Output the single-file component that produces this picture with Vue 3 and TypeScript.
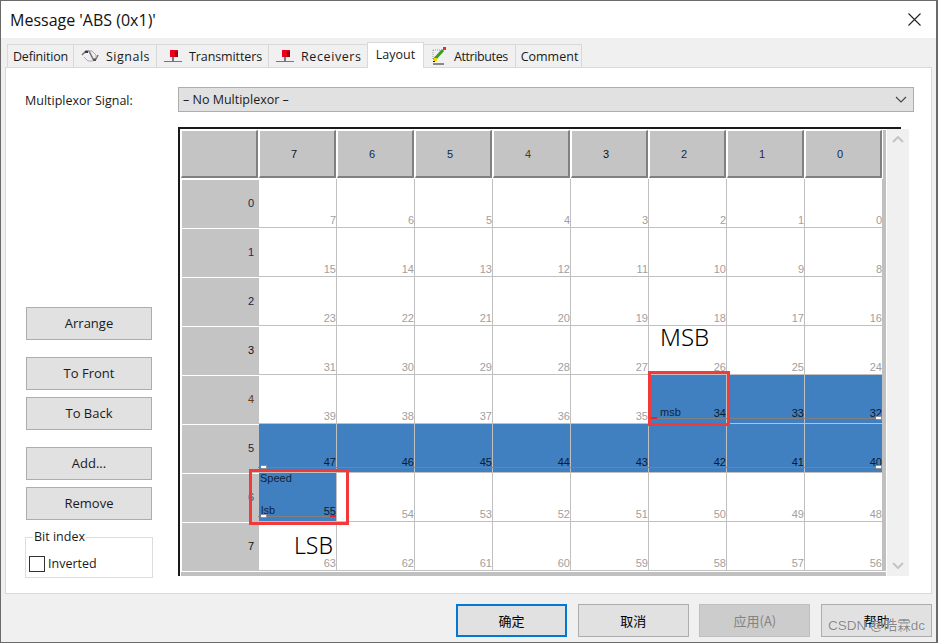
<script setup lang="ts">
const columns = [
  { bit: 7, color: '#111111' },
  { bit: 6, color: '#0f2a55' },
  { bit: 5, color: '#0f2a45' },
  { bit: 4, color: '#5a3a10' },
  { bit: 3, color: '#111111' },
  { bit: 2, color: '#0f2a55' },
  { bit: 1, color: '#3a1a5a' },
  { bit: 0, color: '#0f2a55' },
]
const rowColors = ['#0f2a45', '#4a0f6a', '#0f2a45', '#111111', '#6a3a10', '#0f2a45', '#2a5a9a', '#111111']
const signalBits = new Set([32, 33, 34, 40, 41, 42, 43, 44, 45, 46, 47, 55])

const rows = rowColors.map((color, r) => ({
  index: r,
  color,
  cells: [7, 6, 5, 4, 3, 2, 1, 0].map((offset) => {
    const value = r * 8 + offset
    return { value, on: signalBits.has(value) }
  }),
}))

const lines = [
  { left: 468, top: 288, width: 233 },
  { left: 77, top: 337, width: 624 },
  { left: 77, top: 386, width: 78 },
]
const handles = [
  { left: 695, top: 286 },
  { left: 695, top: 335 },
  { left: 80, top: 335 },
  { left: 80, top: 384 },
]
const redEnds = [
  { left: 470, top: 287 },
  { left: 149, top: 385 },
]
const boxes = [
  { left: 467, top: 241, width: 82, height: 55 },
  { left: 68, top: 339, width: 100, height: 56 },
]
const tabs = ['Definition', 'Signals', 'Transmitters', 'Receivers', 'Layout', 'Attributes', 'Comment']
</script>

<template>
  <div class="window">
    <header class="titlebar">
      <span class="title">Message 'ABS (0x1)'</span>
      <svg class="close" width="13" height="13" viewBox="0 0 13 13">
        <path d="M0.5 0.5L12.5 12.5M12.5 0.5L0.5 12.5" stroke="#222" stroke-width="1.1" fill="none" />
      </svg>
    </header>

    <nav class="tabs">
      <div
        v-for="t in tabs"
        :key="t"
        class="tab"
        :class="['tab-' + t.toLowerCase(), { active: t === 'Layout' }]"
      >
        <svg v-if="t === 'Signals'" class="tab-icon" width="18" height="14" viewBox="0 0 18 14">
          <path d="M1 6L5 2H8L12 10H15L17 6" stroke="#777" stroke-width="1.6" fill="none" />
          <path d="M6 2H11L15 6V9" stroke="#aaa" stroke-width="1" fill="none" />
          <path d="M3 8L7 12H12" stroke="#aaa" stroke-width="1" fill="none" />
          <rect x="4" y="2" width="3" height="2" fill="#5a1a6a" />
          <rect x="12" y="10" width="3" height="2" fill="#555" />
        </svg>
        <svg v-else-if="t === 'Transmitters' || t === 'Receivers'" class="tab-icon" width="18" height="13" viewBox="0 0 18 13">
          <rect x="6" y="0" width="8" height="7" fill="#e8001c" />
          <rect x="11" y="1" width="3" height="6" fill="#a00014" />
          <rect x="8" y="7" width="2" height="4" fill="#777" />
          <rect x="0" y="11" width="18" height="1" fill="#777" />
        </svg>
        <svg v-else-if="t === 'Attributes'" class="tab-icon" width="15" height="18" viewBox="0 0 15 18">
          <path d="M1 3H8M1 3V13" stroke="#999" stroke-width="1" stroke-dasharray="1 1" fill="none" />
          <path d="M2 13L11 3" stroke="#3a9a2a" stroke-width="3" fill="none" />
          <rect x="11" y="0" width="3" height="3" fill="#e03030" />
          <rect x="2" y="11" width="3" height="3" fill="#e8d800" />
          <rect x="1" y="14" width="2" height="1" fill="#111" />
          <rect x="1" y="16" width="11" height="2" fill="#888" />
        </svg>
        <span>{{ t }}</span>
      </div>
    </nav>

    <main class="panel">
      <div class="mux">
        <label class="mux-label">Multiplexor Signal:</label>
        <div class="select">
          <span>– No Multiplexor –</span>
          <svg width="12" height="7" viewBox="0 0 12 7">
            <path d="M1 1L6 6L11 1" stroke="#444" stroke-width="1.1" fill="none" />
          </svg>
        </div>
      </div>

      <div class="content">
        <aside class="side">
          <button class="btn after-far">Arrange</button>
          <button class="btn after-near">To Front</button>
          <button class="btn after-far">To Back</button>
          <button class="btn after-near">Add...</button>
          <button class="btn">Remove</button>
          <fieldset class="group">
            <legend>Bit index</legend>
            <div class="check-row">
              <span class="check"></span>
              <span>Inverted</span>
            </div>
          </fieldset>
        </aside>

        <section class="sheet">
          <div class="sheet-body">
            <div class="grid">
              <div class="head corner"></div>
              <div v-for="c in columns" :key="c.bit" class="head" :style="{ color: c.color }">{{ c.bit }}</div>
              <template v-for="r in rows" :key="r.index">
                <div class="row-head" :style="{ color: r.color }">{{ r.index }}</div>
                <div v-for="cell in r.cells" :key="cell.value" class="cell" :class="{ on: cell.on }">
                  {{ cell.value }}
                </div>
              </template>

              <span v-for="(l, i) in lines" :key="'l' + i" class="mark-line"
                :style="{ left: l.left + 'px', top: l.top + 'px', width: l.width + 'px' }"></span>
              <span v-for="(h, i) in handles" :key="'h' + i" class="mark-handle"
                :style="{ left: h.left + 'px', top: h.top + 'px' }"></span>
              <span v-for="(e, i) in redEnds" :key="'e' + i" class="mark-red"
                :style="{ left: e.left + 'px', top: e.top + 'px' }"></span>

              <span class="sig-text speed">Speed</span>
              <span class="sig-text lsb">lsb</span>
              <span class="sig-text msb">msb</span>

              <span v-for="(b, i) in boxes" :key="'b' + i" class="red-box"
                :style="{ left: b.left + 'px', top: b.top + 'px', width: b.width + 'px', height: b.height + 'px' }"></span>
              <span class="note note-msb">MSB</span>
              <span class="note note-lsb">LSB</span>
            </div>
            <div class="vstrip"></div>
          </div>
          <div class="hstrip"></div>
          <div class="scrollbar">
            <svg width="12" height="7" viewBox="0 0 12 7"><path d="M1 6L6 1L11 6" stroke="#c4c4c4" stroke-width="2" fill="none" /></svg>
            <svg width="12" height="7" viewBox="0 0 12 7"><path d="M1 1L6 6L11 1" stroke="#c4c4c4" stroke-width="2" fill="none" /></svg>
          </div>
        </section>
      </div>
    </main>

    <footer class="footer">
      <button class="btn foot default">确定</button>
      <button class="btn foot">取消</button>
      <button class="btn foot disabled">应用(A)</button>
      <button class="btn foot">帮助</button>
    </footer>

    <span class="watermark">CSDN @皓霖dc</span>
  </div>
</template>

<style>
html, body { margin: 0; background: #ffffff; }
</style>

<style scoped>
.window {
  position: relative;
  width: 938px;
  height: 643px;
  box-sizing: border-box;
  border: 1px solid #6a6a6a;
  border-right-width: 2px;
  background: #f0f0f0;
  display: flex;
  flex-direction: column;
  overflow: hidden;
  font-family: "Open Sans", "Noto Sans CJK SC", sans-serif;
  font-size: 12.5px;
  color: #1a1a1a;
}
.titlebar {
  height: 37px;
  flex: none;
  background: #ffffff;
  display: flex;
  align-items: center;
  justify-content: space-between;
  padding: 0 15px 0 9px;
}
.title { font-size: 16px; color: #111; }
.close { margin-top: -1px; }

.tabs {
  height: 29px;
  flex: none;
  display: flex;
  align-items: flex-end;
  padding-left: 6px;
}
.tab {
  height: 23px;
  box-sizing: border-box;
  border: 1px solid #d9d9d9;
  border-left-width: 0;
  border-bottom: 0;
  background: #f0f0f0;
  display: flex;
  align-items: center;
  justify-content: center;
  gap: 7px;
  flex: none;
}
.tab-definition { width: 67px; border-left-width: 1px; letter-spacing: -0.2px; }
.tab-signals { width: 83px; justify-content: flex-start; padding-left: 7px; letter-spacing: 0.5px; }
.tab-transmitters { width: 112px; justify-content: flex-start; padding-left: 7px; letter-spacing: -0.1px; }
.tab-receivers { width: 99px; justify-content: flex-start; padding-left: 7px; letter-spacing: 0.6px; }
.tab-layout { width: 57px; }
.tab-attributes { width: 92px; justify-content: flex-start; padding-left: 8px; letter-spacing: -0.4px; }
.tab-comment { width: 66px; padding-left: 2px; }
.tab.active {
  height: 26px;
  background: #ffffff;
  border-left-width: 1px;
  margin-left: -1px;
  margin-bottom: -1px;
  padding-bottom: 3px;
  position: relative;
  z-index: 1;
}
.tab-icon { flex: none; }

.panel {
  height: 527px;
  flex: none;
  box-sizing: border-box;
  margin: 0 4px;
  background: #ffffff;
  border: 1px solid #d9d9d9;
  display: flex;
  flex-direction: column;
  padding: 19px 0 0 19px;
}
.mux { display: flex; align-items: center; height: 25px; flex: none; }
.mux-label { width: 153px; flex: none; position: relative; top: 1px; }
.select {
  width: 736px;
  height: 25px;
  box-sizing: border-box;
  background: #e1e1e1;
  border: 1px solid #adadad;
  display: flex;
  align-items: center;
  justify-content: space-between;
  padding: 0 6px 0 4px;
}
.content { display: flex; margin-top: 15px; flex: 1; min-height: 0; }
.side {
  width: 128px;
  flex: none;
  display: flex;
  flex-direction: column;
  padding-top: 180px;
  box-sizing: border-box;
  margin-right: 25px;
}
.btn {
  font: inherit;
  font-size: 13px;
  line-height: 16px;
  color: #1a1a1a;
  background: #e1e1e1;
  border: 1px solid #adadad;
  margin: 0 1px;
  padding: 0 0 2px;
  height: 33px;
  width: 126px;
  flex: none;
}
.after-far { margin-bottom: 17px; }
.after-near { margin-bottom: 7px; }

.group {
  margin: 9px 0 0 0;
  padding: 0 0 0 3px;
  height: 49px;
  box-sizing: border-box;
  width: 128px;
  border: 1px solid #dcdcdc;
  min-width: 0;
  flex: none;
}
.group legend { padding: 0 1px; margin-left: 4px; line-height: 16px; }
.check-row { display: flex; align-items: center; gap: 3px; margin-top: 10px; }
.check { width: 16px; height: 16px; box-sizing: border-box; border: 1px solid #333; background: #fff; }

.sheet {
  position: relative;
  width: 723px;
  height: 449px;
  box-sizing: border-box;
  border-top: 2px solid #1a1a1a;
  border-left: 2px solid #1a1a1a;
  padding: 1px 0 0 1px;
  font-family: "Liberation Sans", sans-serif;
  font-size: 11px;
}
.sheet-body { display: flex; }
.grid {
  position: relative;
  display: grid;
  grid-template-columns: repeat(9, 78px);
  grid-auto-rows: 49px;
  flex: none;
  background: #fff;
}
.head {
  width: 77px;
  height: 48px;
  box-sizing: border-box;
  background: #c4c4c4;
  border-top: 1px solid #fff;
  border-left: 1px solid #fff;
  border-right: 2px solid #808080;
  border-bottom: 2px solid #808080;
  display: flex;
  align-items: center;
  justify-content: center;
  padding-right: 6px;
}
.row-head {
  height: 49px;
  box-sizing: border-box;
  background: #c4c4c4;
  border-top: 1px solid #fff;
  border-left: 1px solid #fff;
  display: flex;
  align-items: center;
  justify-content: flex-end;
  padding: 0 5px 2px 0;
}
.cell {
  box-sizing: border-box;
  background: #fff;
  border-right: 1px solid #c0c0c0;
  border-bottom: 1px solid #c0c0c0;
  display: flex;
  align-items: flex-end;
  justify-content: flex-end;
  line-height: 10px;
  padding-bottom: 2px;
  color: #a0a0a0;
}
.cell.on { background: #4080c0; color: #0a1a30; padding-bottom: 5px; }
.vstrip { width: 3px; background: #c0c0c0; flex: none; }
.hstrip { height: 4px; width: 705px; margin-top: 1px; background: #c0c0c0; }
.scrollbar {
  position: absolute;
  left: 707px;
  top: 0;
  width: 22px;
  height: 447px;
  background: #f0f0f0;
  display: flex;
  flex-direction: column;
  align-items: center;
  justify-content: space-between;
  padding: 7px 0;
  box-sizing: border-box;
}
.mark-line { position: absolute; height: 1px; background: #808080; }
.mark-handle {
  position: absolute;
  width: 6px;
  height: 4px;
  box-sizing: border-box;
  background: #fff;
  border: 1px solid #909090;
  border-left: 0;
}
.mark-red { position: absolute; width: 6px; height: 2px; background: #f02020; }
.sig-text { position: absolute; color: #10243c; line-height: 12px; }
.speed { left: 79px; top: 342px; }
.lsb { left: 80px; top: 374px; }
.msb { left: 479px; top: 276px; }
.red-box {
  position: absolute;
  box-sizing: border-box;
  border: 3px solid #f23a3a;
}
.note {
  position: absolute;
  font-family: "Noto Sans", sans-serif;
  font-size: 24px;
  font-weight: 300;
  line-height: 30px;
  color: #000;
}
.note-msb { left: 479px; top: 192px; }
.note-lsb { left: 113px; top: 400px; font-size: 23px; }

.footer {
  flex: 1;
  display: flex;
  gap: 10.7px;
  padding: 10px 0 0 455px;
  box-sizing: border-box;
}
.foot { width: 111px; margin: 0; padding: 0; font-family: "Noto Sans CJK SC", sans-serif; font-size: 13px; color: #000; }
.default { border: 2px solid #0078d7; }
.disabled { background: #cccccc; border-color: #bfbfbf; color: #838383; }
.watermark {
  position: absolute;
  left: 827px;
  top: 613px;
  font-family: "Liberation Sans", "Noto Sans CJK SC", sans-serif;
  font-size: 13.5px;
  color: rgba(90, 90, 90, 0.72);
  text-shadow: 0 0 1px #fff;
}
</style>
